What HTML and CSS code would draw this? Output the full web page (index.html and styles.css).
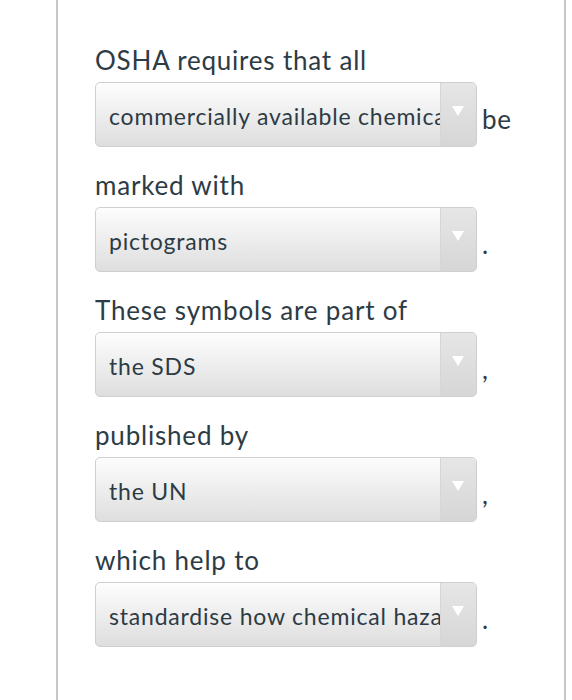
FILE: index.html
```html
<!DOCTYPE html>
<html lang="en">
<head>
  <meta charset="UTF-8">
  <meta name="viewport" content="width=device-width, initial-scale=1.0">
  <title>Question</title>
  <link rel="stylesheet" href="styles.css">
</head>
<body>

  <div class="question">
    <div class="item">
      <div class="label">OSHA requires that all</div>
      <div class="row">
        <div class="dropdown">
          <span class="value">commercially available chemicals</span>
          <span class="arrow"></span>
        </div>
        <span class="after">be</span>
      </div>
    </div>

    <div class="item">
      <div class="label">marked with</div>
      <div class="row">
        <div class="dropdown">
          <span class="value">pictograms</span>
          <span class="arrow"></span>
        </div>
        <span class="after">.</span>
      </div>
    </div>

    <div class="item">
      <div class="label">These symbols are part of</div>
      <div class="row">
        <div class="dropdown">
          <span class="value">the SDS</span>
          <span class="arrow"></span>
        </div>
        <span class="after">,</span>
      </div>
    </div>

    <div class="item">
      <div class="label">published by</div>
      <div class="row">
        <div class="dropdown">
          <span class="value">the UN</span>
          <span class="arrow"></span>
        </div>
        <span class="after">,</span>
      </div>
    </div>

    <div class="item">
      <div class="label">which help to</div>
      <div class="row">
        <div class="dropdown">
          <span class="value">standardise how chemical hazards are communicated</span>
          <span class="arrow"></span>
        </div>
        <span class="after">.</span>
      </div>
    </div>
  </div>

</body>
</html>
```

FILE: styles.css
```css
body {
  margin: 0;
  background-color: #ffffff;
  color: #2d3b45;
  font-family: Lato, "Noto Sans", sans-serif;
}
.question {
  margin-left: 56px;
  width: 510px;
  min-height: 700px;
  box-sizing: border-box;
  border-left: 2px solid #c6c6c6;
  border-right: 2px solid #c6c6c6;
  padding: 45px 0 0 37px;
}
.item {
  margin-bottom: 23px;
}
.label {
  font-size: 26px;
  line-height: 30px;
  letter-spacing: 0.8px;
  margin-bottom: 7px;
}
.row {
  display: flex;
  align-items: flex-start;
}
.dropdown {
  display: flex;
  flex-shrink: 0;
  width: 382px;
  height: 65px;
  box-sizing: border-box;
  border: 1px solid #cfcfcf;
  border-radius: 5px;
  background: linear-gradient(#fdfdfd, #dedede);
  overflow: hidden;
}
.value {
  flex: 1;
  min-width: 0;
  padding: 19px 17px 0 13px;
  font-size: 23px;
  line-height: 28px;
  letter-spacing: 0.8px;
  white-space: nowrap;
  overflow: hidden;
}
.arrow {
  flex-shrink: 0;
  width: 35px;
  position: relative;
  border-left: 1px solid #d6d6d6;
  background: linear-gradient(#e6e6e6, #d6d6d6);
}
.arrow::after {
  content: "";
  position: absolute;
  left: 11px;
  top: 23px;
  border-left: 6px solid transparent;
  border-right: 6px solid transparent;
  border-top: 10px solid #ffffff;
}
.after {
  margin: 22px 0 0 5px;
  font-size: 26px;
  line-height: 30px;
  letter-spacing: 0.8px;
}
```
